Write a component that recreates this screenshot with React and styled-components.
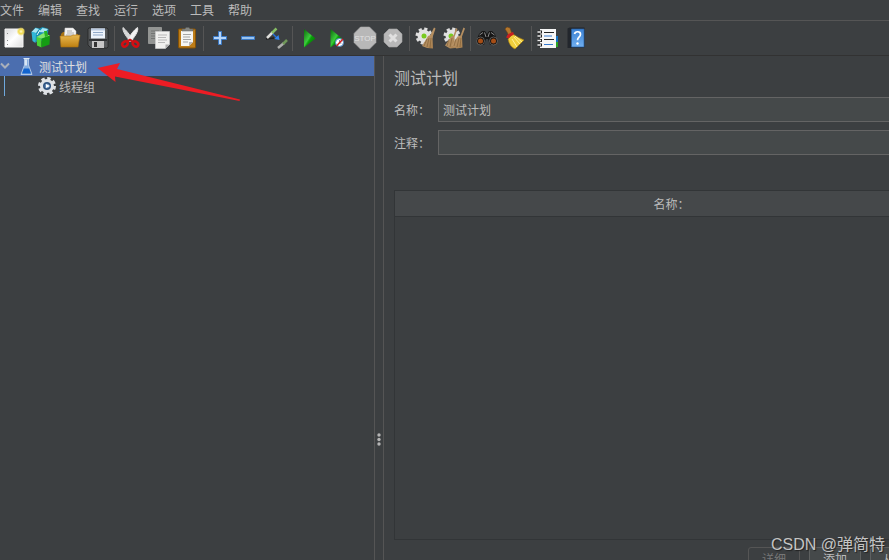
import React from 'react'
import styled, { createGlobalStyle, css } from 'styled-components'

const GlobalStyle = createGlobalStyle`
  * {
    box-sizing: border-box;
  }
  body {
    margin: 0;
    overflow: hidden;
    background: #3c3f41;
    color: #bbbbbb;
    font-family: "Liberation Sans", "Noto Sans CJK SC", sans-serif;
    font-size: 12px;
    line-height: 16px;
  }
  button, input {
    font: inherit;
    color: inherit;
  }
`

const Window = styled.div`
  position: relative;
  display: flex;
  flex-direction: column;
  height: 100vh;
  overflow: hidden;
`

const MenuBar = styled.nav`
  display: flex;
  gap: 14px;
  height: 21px;
  border-bottom: 1px solid #555555;
`

const MenuItem = styled.button`
  padding: 2px 0 0;
  border: 0;
  background: none;
`

const ToolBar = styled.div`
  display: flex;
  align-items: center;
  height: 35px;
  border-bottom: 1px solid #323232;
`

const ToolButton = styled.button`
  display: flex;
  flex: none;
  align-items: center;
  justify-content: center;
  width: 28px;
  height: 28px;
  padding: 0;
  border: 0;
  background: none;
`

const Separator = styled.span`
  flex: none;
  width: 1px;
  height: 25px;
  margin: 0 2px;
  background: #555555;
`

const Workspace = styled.div`
  display: flex;
  flex: 1;
  min-height: 0;
`

const Tree = styled.ul`
  flex: 0 0 374px;
  margin: 0;
  padding: 0;
  list-style: none;
`

const TreeRow = styled.li`
  display: flex;
  align-items: center;
  height: 20px;
  color: ${({ $selected }) => ($selected ? '#e0e0e0' : '#bbbbbb')};
  background: ${({ $selected }) => ($selected ? '#4b6eaf' : 'transparent')};
  ${({ $child }) => $child && css`
    margin-left: 4px;
    padding-left: 32px;
    border-left: 1px solid #6fa8dc;
  `}
`

const TreeIcon = styled.svg`
  flex: none;
  margin-right: 2px;
`

const TreeLabel = styled.span`
  padding-top: 3px;
`

const Splitter = styled.div`
  display: flex;
  flex: none;
  flex-direction: column;
  align-items: center;
  justify-content: flex-end;
  width: 10px;
  padding-bottom: 114px;
  border-left: 1px solid #555555;
  border-right: 1px solid #555555;
`

const Editor = styled.main`
  display: flex;
  flex: 1;
  flex-direction: column;
  min-width: 0;
  padding: 11px 0 0 10px;
  overflow: hidden;
`

const Title = styled.h1`
  margin: 0 0 6px;
  font-size: 16px;
  font-weight: 400;
  line-height: 24px;
`

const Field = styled.div`
  display: flex;
  align-items: center;
  gap: 8px;
  margin-bottom: 8px;
`

const Label = styled.label`
  flex: none;
  width: 36px;
  padding-top: 2px;
  white-space: nowrap;
`

const TextInput = styled.input`
  flex: 1;
  min-width: 0;
  height: 25px;
  padding: 0 4px;
  border: 1px solid #646464;
  border-right: 0;
  background: #45494a;
  outline: none;
`

const TableBox = styled.div`
  flex: 1;
  margin-top: 27px;
  overflow: hidden;
  border: 1px solid #323537;
  border-right: 0;
`

const Table = styled.table`
  width: 1106px;
  table-layout: fixed;
  border-collapse: collapse;
`

const HeaderCell = styled.th`
  height: 25px;
  padding: 3px 0 0;
  border-bottom: 1px solid #323537;
  background: #45484a;
  font-weight: 400;
`

const Actions = styled.div`
  display: flex;
  flex: none;
  gap: 9px;
  height: 20px;
  padding: 7px 0 0 354px;
`

const ActionButton = styled.button`
  flex: none;
  height: 26px;
  padding: 0 12px;
  border: 1px solid #5e6060;
  border-radius: 3px;
  background: #45494a;
  min-width: 52px;
  white-space: nowrap;

  &:disabled {
    border-color: #555555;
    background: none;
    color: #777777;
  }
`

const Pointer = styled.svg`
  position: absolute;
  top: 60px;
  left: 96px;
  pointer-events: none;
`

const Watermark = styled.div`
  position: absolute;
  right: 4px;
  bottom: 3px;
  color: #c4c4c4;
  font-size: 16px;
  line-height: 24px;
  text-shadow: 1px 1px 1px #222222;
`

const Icon = ({ children }) => (
  <svg width="24" height="24" viewBox="0 0 24 24" aria-hidden="true">{children}</svg>
)

const Defs = () => (
  <svg width="0" height="0" style={{ position: 'absolute' }} aria-hidden="true">
    <defs>
      <linearGradient id="paper" x2="1" y2="1">
        <stop stopColor="#d8d8d8" /><stop offset="0.5" stopColor="#ffffff" /><stop offset="1" stopColor="#dddddd" />
      </linearGradient>
      <linearGradient id="play" x2="1" y2="1">
        <stop stopColor="#0a6b0a" /><stop offset="0.45" stopColor="#3ccb3c" /><stop offset="0.55" stopColor="#09a009" /><stop offset="1" stopColor="#056005" />
      </linearGradient>
      <linearGradient id="straw" x2="1" y2="1">
        <stop stopColor="#c9a67c" /><stop offset="1" stopColor="#a37a48" />
      </linearGradient>
      <linearGradient id="folder" x2="0" y2="1">
        <stop stopColor="#e8b850" /><stop offset="1" stopColor="#bd8011" />
      </linearGradient>
      <radialGradient id="glow">
        <stop stopColor="#fffbd0" /><stop offset="0.5" stopColor="#f0d848" /><stop offset="1" stopColor="#f0d848" stopOpacity="0" />
      </radialGradient>
      <linearGradient id="book" x2="0" y2="1">
        <stop stopColor="#3c82d4" /><stop offset="1" stopColor="#70aff0" />
      </linearGradient>
    </defs>
  </svg>
)

const NewIcon = () => (
  <Icon>
    <path d="M3 3h18v18H3z" fill="url(#paper)" stroke="#f5f5f5" />
    <path d="M5.500 7v1M5.500 14v1M5.500 18v1" stroke="#8a8a8a" />
    <circle cx="19" cy="5.500" r="4.500" fill="url(#glow)" />
  </Icon>
)

const TemplatesIcon = () => (
  <Icon>
    <path d="M1.500 6l4-4.500 4 1 3-1.500 6 2-.5 4-8 10-6-2z" fill="#1790b5" />
    <path d="M1.500 6l4-4 3.500 1-3 4zM9 6l3.500-4 5.500 1-3 3.500z" fill="#a7e4f2" />
    <path d="M1.500 6l4.500 1-.5 10-3-2z" fill="#31b7d8" />
    <path d="M6.500 11l5 1.500v9l-4.500-2z" fill="#4bd435" />
    <path d="M11.500 12.500l8.500-3-.5 9-8 3z" fill="#149d13" />
    <path d="M6.500 11l7-4 6.500 2.500-8.500 3z" fill="#83e66b" />
    <path d="M14 5l1 6 3-1-1-5z" fill="#29b620" />
    <path d="M10 4l-3 5" stroke="#e3f9fc" />
  </Icon>
)

const OpenIcon = () => (
  <Icon>
    <path d="M3 8l2-2h5l2 2h8v10H3z" fill="#a87313" />
    <path d="M7 2h8l3 3v9H6z" fill="#f3f3f3" stroke="#c5c5c5" strokeWidth=".5" />
    <path d="M9 5h5M9 7h7M8 9h8" stroke="#999999" strokeWidth=".8" />
    <path d="M2 10h11l2-1h7l-2 12H3z" fill="url(#folder)" stroke="#a97010" strokeWidth=".6" />
  </Icon>
)

const SaveIcon = () => (
  <Icon>
    <path d="M3 2h18l1 1v18l-1 1H5l-3-3V3z" fill="#55585a" stroke="#202020" strokeWidth=".7" />
    <path d="M5 2.500h14v10H5z" fill="#eef4fb" />
    <path d="M5 2.500h14v2H5z" fill="#b9c9df" />
    <path d="M7 6.500h10M7 9h10" stroke="#91a9c8" />
    <path d="M3 13h18v2H3z" fill="#303234" />
    <path d="M6 15h12v7H6z" fill="#c7c7c7" />
    <path d="M8 16h3v5H8z" fill="#353535" />
  </Icon>
)

const CutIcon = () => (
  <Icon>
    <path d="M4 1.500C3 5 8 12 12 16l2-2C11 9 7 4 4 1.500z" fill="#d8d8d8" stroke="#d8d8d8" />
    <path d="M18.500 1.500C20 5 15 12 11 16l-2-2c2-5 6-10 9.500-12.500z" fill="#f3f3f3" stroke="#e8e8e8" />
    <g fill="none" stroke="#d20e12" strokeWidth="2.500" strokeLinecap="round">
      <ellipse cx="6" cy="18" rx="3" ry="2.300" transform="rotate(-40 6 18)" />
      <ellipse cx="16.500" cy="18" rx="3" ry="2.300" transform="rotate(40 16.500 18)" />
      <path d="M9 15l2-1 2 1" />
    </g>
  </Icon>
)

const CopyIcon = () => (
  <Icon>
    <path d="M1.500 1.500h13v16h-13z" fill="#939593" stroke="#a6a8a5" strokeWidth=".7" />
    <path d="M4 5h8M4 7.500h5M4 10h4M4 12.500h4" stroke="#737573" />
    <path d="M8.500 5.500h14v13l-4 4h-10z" fill="#f0f0ee" stroke="#cccccc" strokeWidth=".7" />
    <path d="M11 9h9M11 11.500h8M11 14h9M11 16.500h7" stroke="#b8b8b8" />
    <path d="M18.500 22.500v-4h4z" fill="#aaaaaa" />
  </Icon>
)

const PasteIcon = () => (
  <Icon>
    <rect x="3.500" y="3" width="17" height="19" rx="1" fill="#bd7d19" stroke="#845207" />
    <path d="M6 5h12v11l-4 4H6z" fill="#f5f5f3" />
    <path d="M8 8.500h8M8 11h7M8 13.500h8M8 16h5" stroke="#a5a5a5" />
    <path d="M14 20v-4h4z" fill="#b5b5b5" />
    <path d="M7 5V3h3l1-1.500h3L15 3h3v2z" fill="#858783" stroke="#5d5e5c" strokeWidth=".5" />
  </Icon>
)

const PlusIcon = () => (
  <Icon>
    <path d="M10.500 5.500h3v5h5v3h-5v5h-3v-5h-5v-3h5z" fill="#b4d5fa" stroke="#3a78c3" />
  </Icon>
)

const MinusIcon = () => (
  <Icon><path d="M5.500 10.500h13v3h-13z" fill="#9ac3ee" stroke="#3a78c3" /></Icon>
)

const ToggleIcon = () => (
  <Icon>
    <path d="M2 13l8-1" stroke="#202020" strokeWidth="1.500" />
    <path d="M3 12l6-6" stroke="#dededa" strokeWidth="2.500" />
    <path d="M8 7l4.500-4.500" stroke="#86bd64" strokeWidth="2.500" />
    <path d="M9 8l4 4" stroke="#2270d9" strokeWidth="1.500" />
    <path d="M15.500 14l-5-1 4-4z" fill="#3385ee" />
    <g opacity=".7">
      <path d="M14 22l6-5" stroke="#dededa" strokeWidth="2.500" />
      <path d="M19 18l4-4" stroke="#86bd64" strokeWidth="2.500" />
    </g>
  </Icon>
)

const StartIcon = () => (
  <Icon><path d="M7 3l11.500 9.500L7 21.500z" fill="url(#play)" /></Icon>
)

const StartNoPauseIcon = () => (
  <Icon>
    <path d="M5.500 3L17 12.500 5.500 21.500z" fill="url(#play)" />
    <circle cx="14.500" cy="16.500" r="4" fill="#ffffff" stroke="#4c86c4" />
    <path d="M14.500 14v3h2" fill="none" stroke="#6f91b5" />
    <path d="M11.500 20l6.500-7" stroke="#d32020" strokeWidth="1.500" />
  </Icon>
)

const StopIcon = () => (
  <Icon>
    <path d="M7.500 1h9L23 7.500v9L16.500 23h-9L1 16.500v-9z" fill="#b8b8b8" stroke="#a6a6a6" strokeWidth=".6" />
    <text x="12" y="15" textAnchor="middle" fontFamily="Liberation Sans" fontSize="8" fill="#e0e0e0">STOP</text>
  </Icon>
)

const ShutdownIcon = () => (
  <Icon>
    <path d="M8 3h8l5 5v8l-5 5H8l-5-5V8z" fill="#b8b8b8" stroke="#a6a6a6" strokeWidth=".6" />
    <path d="M8.500 8.500l7 7M15.500 8.500l-7 7" stroke="#e0e0e0" strokeWidth="3" />
  </Icon>
)

const Cog = ({ cx, cy }) => (
  <g transform={`translate(${cx} ${cy})`}>
    <circle r="7.200" fill="none" stroke="#dfdfdf" strokeWidth="2.600" strokeDasharray="3.200 2.455" />
    <circle r="6.500" fill="#e2e2e2" />
  </g>
)

const ClearIcon = () => (
  <Icon>
    <Cog cx="10" cy="10" />
    <circle cx="10" cy="10" r="2.500" fill="#79ca20" />
    <path d="M20 1.500l1.500 1-3 9 .5 11-6-.5-5-2 6-10 2.500-1z" fill="url(#straw)" />
    <path d="M13 13l-3 7M15 12l-2 9M17 12l-1 10" stroke="#7a5a33" strokeWidth=".6" />
  </Icon>
)

const ClearAllIcon = () => (
  <Icon>
    <Cog cx="10" cy="10" />
    <circle cx="9" cy="10" r="2.500" fill="#79ca20" />
    <path d="M14 2l1.500 1-3 8 .5 11-5 .5-5-3 6-9 2.500-1z" fill="url(#straw)" />
    <path d="M21.500 1.500l1.500 1-3 8 .5 11-6 1-5-3 6-9 3-1z" fill="url(#straw)" />
    <path d="M7 13l-2 7M10 12l-2 9M14 13l-2 7M17 12l-2 9M19 12l-1 9" stroke="#7a5a33" strokeWidth=".6" />
  </Icon>
)

const SearchIcon = () => (
  <Icon>
    <path d="M4 8l3-3h3l2 3 2-3h3l3 3 2 7-3 4h-4l-2-6h-2l-2 6H5l-4-4z" fill="#171717" />
    <path d="M4.500 9L8 6.500M19.500 9L16 6.500M9.500 6.500L11 11M14.500 6.500L13 11" stroke="#8a8a8a" />
    <circle cx="5.500" cy="15" r="4" fill="#15120f" stroke="#777777" strokeWidth=".7" />
    <circle cx="18.500" cy="15" r="4" fill="#15120f" stroke="#777777" strokeWidth=".7" />
    <circle cx="5.500" cy="15" r="2.500" fill="#a64e17" />
    <circle cx="18.500" cy="15" r="2.500" fill="#a64e17" />
  </Icon>
)

const ResetIcon = () => (
  <Icon>
    <path d="M2 3l2-2 3 1 2 6-3 2-2-4z" fill="#b4772d" stroke="#75430f" strokeWidth=".5" />
    <path d="M10 8c4 3 7 4 11 6l-9 9c-4-2-6-5-7-10z" fill="#f0cf3c" stroke="#a67c12" strokeWidth=".7" />
    <path d="M9 13l5 8M11 11l6 7M12 10l7 6" stroke="#fff098" />
    <path d="M4.500 12c1-3 3-4 6-4.500" fill="none" stroke="#ca2020" strokeWidth="3" />
  </Icon>
)

const FunctionIcon = () => (
  <Icon>
    <path d="M18 10h4v6h-4z" fill="#1472c4" />
    <path d="M18 16h4v5h-4z" fill="#2aa522" />
    <path d="M4 3h16v19H4z" fill="#f6f6f6" />
    <path d="M8 6.500h10M8 13.500h10" stroke="#222222" />
    <path d="M8 10h8M8 18.500h9" stroke="#3579ce" />
    <path d="M2 6h4M2 10h4M2 14.500h4M2 19h4" stroke="#222222" strokeWidth="3" />
    <path d="M1.500 6H5M1.500 10H5M1.500 14.500H5M1.500 19H5" stroke="#eeeeee" strokeWidth="1.500" />
  </Icon>
)

const HelpIcon = () => (
  <Icon>
    <path d="M3.500 2.500l2-1h15v19.500l-1 1h-16z" fill="#22262c" />
    <path d="M7.500 3H20v18H7.500z" fill="url(#book)" stroke="#2862a5" strokeWidth=".7" />
    <path d="M10.500 8c.5-3 6-3 6 .2 0 3-3 3-3 6" fill="none" stroke="#ffffff" strokeWidth="1.700" />
    <circle cx="13.500" cy="17.500" r="1.200" fill="#ffffff" />
  </Icon>
)

const toolGroups = [
  [['新建', NewIcon], ['模板', TemplatesIcon], ['打开', OpenIcon], ['保存', SaveIcon]],
  [['剪切', CutIcon], ['复制', CopyIcon], ['粘贴', PasteIcon]],
  [['展开', PlusIcon], ['折叠', MinusIcon], ['切换', ToggleIcon]],
  [['启动', StartIcon], ['不停顿开始', StartNoPauseIcon], ['停止', StopIcon], ['关闭', ShutdownIcon]],
  [['清除', ClearIcon], ['清除全部', ClearAllIcon]],
  [['搜索', SearchIcon], ['重置搜索', ResetIcon]],
  [['函数助手', FunctionIcon], ['帮助', HelpIcon]],
]

const menus = ['文件', '编辑', '查找', '运行', '选项', '工具', '帮助']

const App = () => (
  <Window>
    <GlobalStyle />
    <Defs />
    <MenuBar>
      {menus.map(name => <MenuItem key={name}>{name}</MenuItem>)}
    </MenuBar>
    <ToolBar role="toolbar">
      {toolGroups.map((group, i) => (
        <React.Fragment key={group[0][0]}>
          {i > 0 && <Separator />}
          {group.map(([name, Glyph]) => (
            <ToolButton key={name} aria-label={name}><Glyph /></ToolButton>
          ))}
        </React.Fragment>
      ))}
    </ToolBar>
    <Workspace>
      <Tree>
        <TreeRow $selected>
          <TreeIcon width="37" height="20" viewBox="0 0 37 20">
            <path d="M1 7.500l4 4 4-4" fill="none" stroke="#a9b0ba" strokeWidth="2" />
            <path d="M24.500 3h4v6l3.500 9.500H21L24.500 9z" fill="#86aee0" stroke="#c3d7ee" strokeWidth=".8" />
            <path d="M23.800 12.500h5.400l1.800 5h-9z" fill="#1264cf" />
            <path d="M26 3.500v6" stroke="#f3f8fd" strokeWidth="1.500" />
            <path d="M23.500 2.500h6" stroke="#dbe8f5" />
          </TreeIcon>
          <TreeLabel>测试计划</TreeLabel>
        </TreeRow>
        <TreeRow $child>
          <TreeIcon width="20" height="20" viewBox="0 0 20 20">
            <circle cx="10" cy="10" r="7.500" fill="none" stroke="#dfe2e6" strokeWidth="3" strokeDasharray="3.400 2.490" />
            <circle cx="10" cy="10" r="5.500" fill="#345a88" stroke="#dfe2e6" strokeWidth="3" />
            <circle cx="10" cy="10" r="3" fill="#5f88b8" stroke="#2f4f78" />
            <path d="M9 8l4 2-4 2z" fill="#ffffff" />
          </TreeIcon>
          <TreeLabel>线程组</TreeLabel>
        </TreeRow>
      </Tree>
      <Splitter>
        <svg width="4" height="13" viewBox="0 0 4 13" fill="#b5b5b5">
          <circle cx="2" cy="2" r="1.700" />
          <circle cx="2" cy="6.500" r="1.700" />
          <circle cx="2" cy="11" r="1.700" />
        </svg>
      </Splitter>
      <Editor>
        <Title>测试计划</Title>
        <Field>
          <Label htmlFor="plan-name">名称：</Label>
          <TextInput id="plan-name" defaultValue="测试计划" />
        </Field>
        <Field>
          <Label htmlFor="plan-comment">注释：</Label>
          <TextInput id="plan-comment" />
        </Field>
        <TableBox>
          <Table>
            <thead>
              <tr>
                <HeaderCell scope="col">名称：</HeaderCell>
                <HeaderCell scope="col" />
              </tr>
            </thead>
          </Table>
        </TableBox>
        <Actions>
          <ActionButton disabled>详细</ActionButton>
          <ActionButton>添加</ActionButton>
          <ActionButton>从剪贴板添加</ActionButton>
        </Actions>
      </Editor>
    </Workspace>
    <Pointer width="146" height="44" viewBox="0 0 146 44" aria-hidden="true">
      <path d="M1.500 8L24 3l-3 6 123 30.500-.5 1.500L19 16.500l.5 5.500z" fill="#ed1c24" />
    </Pointer>
    <Watermark>CSDN @弹简特</Watermark>
  </Window>
)

export default App
